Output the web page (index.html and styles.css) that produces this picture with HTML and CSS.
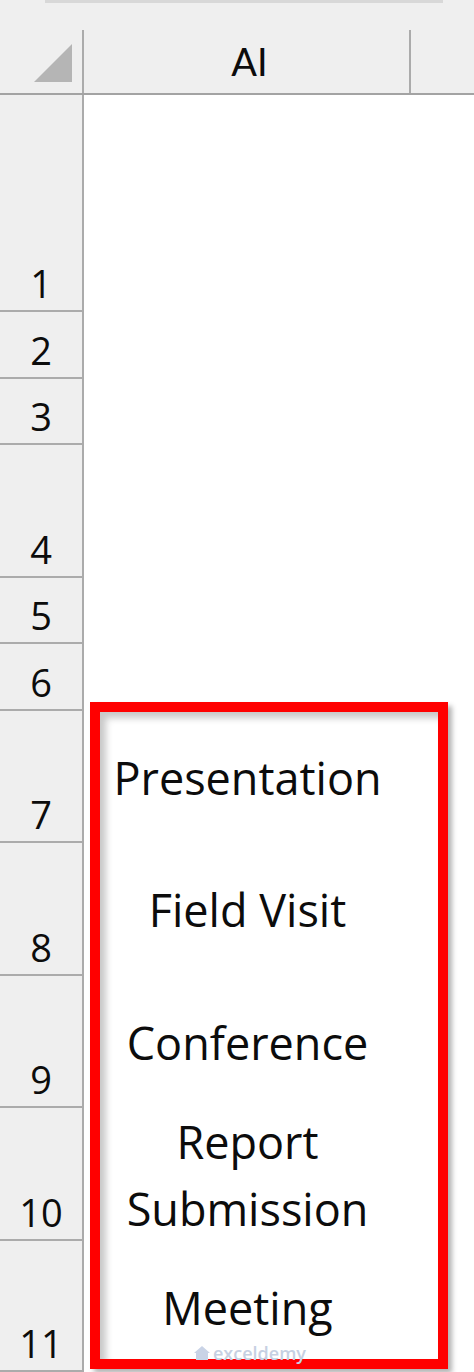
FILE: index.html
```html
<!DOCTYPE html>
<html>
<head>
<meta charset="utf-8">
<link rel="stylesheet" href="styles.css">
</head>
<body>
<div class="sheet">
  <div class="head">
    <div class="topband"></div>
    <div class="head-cells">
      <div class="corner">
        <svg width="40" height="40" viewBox="0 0 40 40"><polygon points="39,1 39,39 1,39" fill="#b5b5b5"/></svg>
      </div>
      <div class="colhead">AI</div>
      <div class="colrest"></div>
    </div>
  </div>
  <div class="rows">
    <div class="row h217"><div class="rh">1</div><div class="cell"></div></div>
    <div class="row h67"><div class="rh">2</div><div class="cell"></div></div>
    <div class="row h66"><div class="rh">3</div><div class="cell"></div></div>
    <div class="row h133"><div class="rh">4</div><div class="cell"></div></div>
    <div class="row h66"><div class="rh">5</div><div class="cell"></div></div>
    <div class="row h67"><div class="rh">6</div><div class="cell"></div></div>
    <div class="row h132"><div class="rh">7</div><div class="cell">Presentation</div></div>
    <div class="row h133"><div class="rh">8</div><div class="cell">Field Visit</div></div>
    <div class="row h132"><div class="rh">9</div><div class="cell">Conference</div></div>
    <div class="row h133"><div class="rh">10</div><div class="cell">Report<br>Submission</div></div>
    <div class="row h131"><div class="rh">11</div><div class="cell cell-last">Meeting</div></div>
  </div>
  <div class="selection"></div>
  <div class="watermark">
    <svg width="18" height="16" viewBox="0 0 18 16"><path d="M1 8 L9 1 L17 8 L15 8 L15 15 L3 15 L3 8 Z" fill="#c9d3e6"/></svg>
    <span>exceldemy</span>
  </div>
</div>
</body>
</html>
```
FILE: styles.css
```css
html, body {
  margin: 0;
  padding: 0;
  background: #ffffff;
}
.sheet {
  position: relative;
  width: 474px;
  height: 1372px;
  overflow: hidden;
  font-family: "Open Sans", Lato, sans-serif;
  color: #0c0c0c;
}
.head {
  height: 93px;
  background: #efefef;
  border-bottom: 2px solid #a3a3a3;
  display: flex;
  flex-direction: column;
}
.topband {
  height: 3px;
  margin: 0 31px 0 45px;
  background: #d8d8d8;
}
.head-cells {
  flex: 1;
  display: flex;
  align-items: flex-end;
}
.corner {
  width: 84px;
  height: 63px;
  border-right: 2px solid #ababab;
  display: flex;
  align-items: flex-start;
  justify-content: flex-start;
  padding: 13px 0 0 33px;
  box-sizing: border-box;
}
.colhead {
  width: 327px;
  height: 63px;
  border-right: 2px solid #ababab;
  display: flex;
  align-items: center;
  justify-content: center;
  font-family: Lato, "Open Sans", sans-serif;
  font-size: 38px;
  line-height: 1;
  padding: 0 0 2px 6px;
  box-sizing: border-box;
}
.colrest {
  flex: 1;
  height: 63px;
}
.rows {
  display: flex;
  flex-direction: column;
}
.row {
  display: flex;
  flex: none;
}
.h217 { height: 217px; }
.h67 { height: 67px; }
.h66 { height: 66px; }
.h133 { height: 133px; }
.h132 { height: 132px; }
.h131 { height: 131px; }
.rh {
  width: 84px;
  flex: none;
  background: #efefef;
  border-right: 2px solid #ababab;
  border-bottom: 2px solid #ababab;
  box-sizing: border-box;
  display: flex;
  align-items: flex-end;
  justify-content: center;
  font-size: 38px;
  line-height: 1;
  padding: 0 0 8px 0;
}
.cell {
  width: 327px;
  flex: none;
  display: flex;
  align-items: center;
  justify-content: center;
  text-align: center;
  font-size: 45px;
  line-height: 67px;
}
.cell-last {
  padding-top: 2px;
  box-sizing: border-box;
}
.selection {
  position: absolute;
  left: 90px;
  top: 702px;
  width: 358px;
  height: 667px;
  box-sizing: border-box;
  border: 10px solid #ff0000;
  box-shadow: 4px 4px 5px rgba(0, 0, 0, 0.3), inset 6px 6px 7px rgba(0, 0, 0, 0.22);
}
.watermark {
  position: absolute;
  left: 193px;
  top: 1344px;
  display: flex;
  align-items: center;
  gap: 2px;
  color: #c6d0e2;
  font-family: "Open Sans", sans-serif;
  font-size: 18px;
  font-weight: 600;
  line-height: 1;
}
```
